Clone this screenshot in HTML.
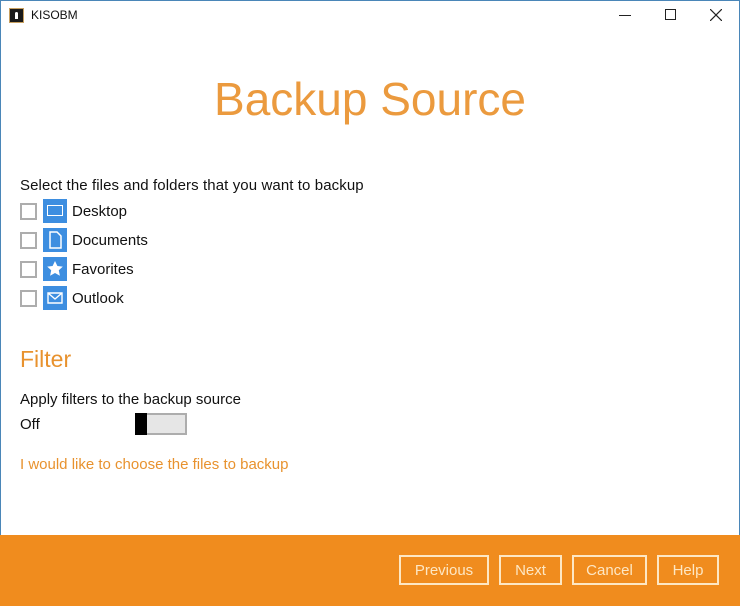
<!DOCTYPE html>
<html><head><style>
*{margin:0;padding:0;box-sizing:border-box}
body{width:740px;height:606px;overflow:hidden;background:#fff;font-family:"Liberation Sans",sans-serif;position:relative}
.win{position:absolute;inset:0;border:1px solid #4a86b8;border-bottom:none}
.t{position:absolute;white-space:nowrap;color:#111}
.cb{position:absolute;left:20px;width:17px;height:17px;border:2px solid #adadad;background:#fff}
.ic{position:absolute;left:43px;width:24px;height:24px;background:#3d8ee0}
.btn{position:absolute;top:555px;height:30px;border:2px solid #fde7c4;color:#fde7c4;font-size:15px;text-align:center;line-height:28px}
</style></head><body>
<div class="win"></div>
<div style="position:absolute;left:9px;top:8px;width:15px;height:15px;background:#1a1a1a;border:1px solid #c8a060"></div>
<div style="position:absolute;left:15px;top:12px;width:3px;height:7px;background:#fff;border-radius:2px 2px 0 0"></div>
<div class="t" style="left:31px;top:8px;font-size:12px">KISOBM</div>
<div style="position:absolute;left:619px;top:15px;width:12px;height:1px;background:#222"></div>
<div style="position:absolute;left:665px;top:9px;width:11px;height:11px;border:1px solid #222"></div>
<svg style="position:absolute;left:710px;top:9px" width="12" height="12"><path d="M0 0L12 12M12 0L0 12" stroke="#222" stroke-width="1.2"/></svg>
<div class="t" style="left:0;width:740px;text-align:center;top:72px;font-size:46px;color:#eb9a3e;font-weight:300">Backup Source</div>
<div class="t" style="left:20px;top:177px;font-size:15px;letter-spacing:0.1px">Select the files and folders that you want to backup</div>
<div class="cb" style="top:203px"></div><div class="ic" style="top:199px"><div style="position:absolute;left:4px;top:6px;width:16px;height:11px;border:1.5px solid #fff"></div></div><div class="t" style="left:72px;top:203px;font-size:15px">Desktop</div>
<div class="cb" style="top:232px"></div><div class="ic" style="top:228px"><svg width="24" height="24"><path d="M7 4h7l4 4v12H7z" fill="none" stroke="#fff" stroke-width="1.5"/></svg></div><div class="t" style="left:72px;top:232px;font-size:15px">Documents</div>
<div class="cb" style="top:261px"></div><div class="ic" style="top:257px"><svg width="24" height="24"><path d="M12 4l2.4 5 5.4.6-4 3.7 1.1 5.4L12 16l-4.9 2.7 1.1-5.4-4-3.7 5.4-.6z" fill="#fff"/></svg></div><div class="t" style="left:72px;top:261px;font-size:15px">Favorites</div>
<div class="cb" style="top:290px"></div><div class="ic" style="top:286px"><svg width="24" height="24"><path d="M5 7h14v10H5zM5 7l7 6 7-6" fill="none" stroke="#fff" stroke-width="1.4"/></svg></div><div class="t" style="left:72px;top:290px;font-size:15px">Outlook</div>
<div class="t" style="left:20px;top:346px;font-size:23px;color:#e8922e">Filter</div>
<div class="t" style="left:20px;top:391px;font-size:15px">Apply filters to the backup source</div>
<div class="t" style="left:20px;top:416px;font-size:15px">Off</div>
<div style="position:absolute;left:135px;top:413px;width:52px;height:22px;border:2px solid #adadad;background:#e6e6e6"></div>
<div style="position:absolute;left:135px;top:413px;width:12px;height:22px;background:#000"></div>
<div class="t" style="left:20px;top:456px;font-size:15px;color:#e8922e">I would like to choose the files to backup</div>
<div style="position:absolute;left:0;top:535px;width:740px;height:71px;background:#f08c1e"></div>
<div class="btn" style="left:399px;width:90px">Previous</div>
<div class="btn" style="left:499px;width:63px">Next</div>
<div class="btn" style="left:572px;width:75px">Cancel</div>
<div class="btn" style="left:657px;width:62px">Help</div>
</body></html>
